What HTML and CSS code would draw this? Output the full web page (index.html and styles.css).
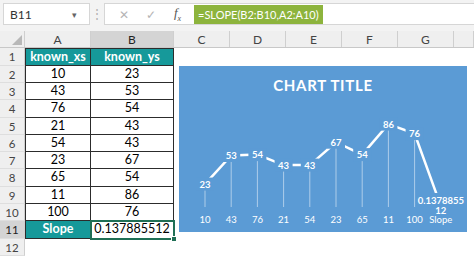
FILE: index.html
```html
<!DOCTYPE html>
<html lang="en">

<head>
    <meta charset="UTF-8">
    <meta name="viewport" content="width=device-width, initial-scale=1.0">
    <link rel="stylesheet" href="styles.css">
    <title>SLOPE</title>
</head>

<body>
<div class="fbar">
    <div class="namebox"><span>B11</span><span class="caret">&#9662;</span></div>
    <div class="grip">&#8942;</div>
    <div class="input">
        <span class="btn">&#10005;</span>
        <span class="btn">&#10003;</span>
        <span class="btn fx">f<sub>x</sub></span>
        <span class="formula">=SLOPE(B2:B10,A2:A10)</span>
    </div>
</div>

<div class="sheet">
    <div class="row head">
        <div class="rh corner">
            <svg width="10" height="10" viewBox="0 0 10 10"><polygon points="10,0 10,10 0,10" fill="#b8b8b8"/></svg>
        </div>
        <div class="ch a">A</div>
        <div class="ch b on">B</div>
        <div class="ch c">C</div>
        <div class="ch c">D</div>
        <div class="ch c">E</div>
        <div class="ch c">F</div>
        <div class="ch c">G</div>
        <div class="ch h"></div>
    </div>
    <div class="row"><div class="rh">1</div><div class="cell a th top">known_xs</div><div class="cell b th top">known_ys</div></div>
    <div class="row"><div class="rh">2</div><div class="cell a">10</div><div class="cell b">23</div></div>
    <div class="row"><div class="rh">3</div><div class="cell a">43</div><div class="cell b">53</div></div>
    <div class="row"><div class="rh">4</div><div class="cell a">76</div><div class="cell b">54</div></div>
    <div class="row"><div class="rh">5</div><div class="cell a">21</div><div class="cell b">43</div></div>
    <div class="row"><div class="rh">6</div><div class="cell a">54</div><div class="cell b">43</div></div>
    <div class="row"><div class="rh">7</div><div class="cell a">23</div><div class="cell b">67</div></div>
    <div class="row"><div class="rh">8</div><div class="cell a">65</div><div class="cell b">54</div></div>
    <div class="row"><div class="rh">9</div><div class="cell a">11</div><div class="cell b">86</div></div>
    <div class="row"><div class="rh">10</div><div class="cell a">100</div><div class="cell b">76</div></div>
    <div class="row"><div class="rh on">11</div><div class="cell a th">Slope</div><div class="cell b sel">0.137885512<i class="handle"></i></div></div>
    <div class="row"><div class="rh">12</div></div>

    <!-- chart sits over columns C..G -->
    <div class="chart">
        <svg width="288" height="166" viewBox="0 0 288 166">
            <text class="title" x="144" y="25">CHART TITLE</text>
            <g class="drops">
                <line x1="26" y1="118" x2="26" y2="141"/>
                <line x1="52.2" y1="89.5" x2="52.2" y2="141"/>
                <line x1="78.4" y1="88.6" x2="78.4" y2="141"/>
                <line x1="104.6" y1="99.1" x2="104.6" y2="141"/>
                <line x1="130.8" y1="99.1" x2="130.8" y2="141"/>
                <line x1="157" y1="76.2" x2="157" y2="141"/>
                <line x1="183.2" y1="88.6" x2="183.2" y2="141"/>
                <line x1="209.4" y1="58.1" x2="209.4" y2="141"/>
                <line x1="235.6" y1="67.6" x2="235.6" y2="141"/>
            </g>
            <polyline class="line" points="26,118.1 52.2,89.5 78.4,88.6 104.6,99.1 130.8,99.1 157,76.2 183.2,88.6 209.4,58.1 235.6,67.6 261.8,139.9"/>
            <g class="pads">
                <rect x="17" y="111.6" width="18" height="13"/>
                <rect x="43.2" y="83" width="18" height="13"/>
                <rect x="69.4" y="82.1" width="18" height="13"/>
                <rect x="95.6" y="92.6" width="18" height="13"/>
                <rect x="121.8" y="92.6" width="18" height="13"/>
                <rect x="148" y="69.7" width="18" height="13"/>
                <rect x="174.2" y="82.1" width="18" height="13"/>
                <rect x="200.4" y="51.6" width="18" height="13"/>
                <rect x="226.6" y="61.1" width="18" height="13"/>
                <rect x="237" y="127" width="50" height="22"/>
            </g>
            <g class="axis">
                <text x="26" y="157">10</text>
                <text x="52.2" y="157">43</text>
                <text x="78.4" y="157">76</text>
                <text x="104.6" y="157">21</text>
                <text x="130.8" y="157">54</text>
                <text x="157" y="157">23</text>
                <text x="183.2" y="157">65</text>
                <text x="209.4" y="157">11</text>
                <text x="235.6" y="157">100</text>
                <text x="261.8" y="157">Slope</text>
            </g>
            <g class="labels">
                <text x="26" y="121.5">23</text>
                <text x="52.2" y="92.9">53</text>
                <text x="78.4" y="92">54</text>
                <text x="104.6" y="102.5">43</text>
                <text x="130.8" y="102.5">43</text>
                <text x="157" y="79.6">67</text>
                <text x="183.2" y="92">54</text>
                <text x="209.4" y="61.5">86</text>
                <text x="235.6" y="71">76</text>
                <text x="261.8" y="137.5">0.1378855</text>
                <text x="261.8" y="147.5">12</text>
            </g>
        </svg>
    </div>
</div>
</body>

</html>
```
FILE: styles.css
```css
* {
    margin: 0;
    padding: 0;
    box-sizing: border-box;
}

body {
    width: 474px;
    height: 259px;
    overflow: hidden;
    background: #fff;
    font-family: Lato, "Liberation Sans", sans-serif;
    font-size: 12px;
    color: #000;
}

/* formula bar */
.fbar {
    height: 31px;
    background: #f3f3f3;
    display: flex;
    align-items: flex-start;
    padding-top: 3px;
}

.namebox {
    width: 87px;
    height: 22px;
    margin-left: 3px;
    background: #fff;
    border: 1px solid #d6d6d6;
    display: flex;
    align-items: center;
    justify-content: space-between;
    padding: 0 12px 0 6px;
    color: #333;
}

.caret {
    font-size: 9px;
    color: #666;
}

.grip {
    width: 14px;
    text-align: center;
    color: #b0b0b0;
    line-height: 22px;
}

.input {
    flex: 1;
    height: 22px;
    background: #fff;
    border: 1px solid #d6d6d6;
    border-right: 0;
    display: flex;
    align-items: center;
    padding-left: 5px;
}

.btn {
    width: 27px;
    text-align: center;
    color: #b5b5b5;
    font-size: 12px;
}

.btn.fx {
    font-family: "Liberation Serif", serif;
    font-style: italic;
    color: #555;
    font-size: 13px;
}

.btn.fx sub {
    font-size: 8px;
}

.formula {
    margin-left: 3px;
    height: 19px;
    line-height: 19px;
    padding: 0 4px;
    background: #8db43d;
    color: #fff;
    font-size: 11px;
}

/* sheet */
.sheet {
    position: relative;
}

.row {
    display: flex;
    height: 17.3px;
}

.rh {
    width: 25px;
    background: #efefef;
    border-right: 1px solid #cfcfcf;
    border-bottom: 1px solid #dedede;
    color: #444;
    text-align: center;
    line-height: 17px;
    font-size: 11.5px;
}

.rh.on {
    background: #d4d4d4;
    color: #222;
}

.head {
    height: 17.4px;
    border-bottom: 1px solid #c8c8c8;
}

.corner {
    display: flex;
    align-items: flex-end;
    justify-content: flex-end;
    padding: 0 2px 2px 0;
    border-bottom: 0;
}

.ch {
    background: #efefef;
    border-right: 1px solid #cfcfcf;
    text-align: center;
    line-height: 17px;
    color: #444;
    font-size: 12px;
}

.ch.on {
    background: #d4d4d4;
    color: #222;
}

.a {
    width: 66px;
}

.b {
    width: 83px;
}

.c {
    width: 56px;
}

.h {
    width: 20px;
}

.cell {
    text-align: center;
    line-height: 16px;
    border-right: 1px solid #2c2c2c;
    border-bottom: 1px solid #2c2c2c;
    font-size: 12.5px;
}

.cell.a {
    border-left: 1px solid #2c2c2c;
}

.cell.top {
    border-top: 1px solid #2c2c2c;
}

.th {
    background: #16999a;
    color: #fff;
    font-weight: bold;
}

.sel {
    position: relative;
    outline: 2px solid #1f6f55;
    outline-offset: -1px;
}

.handle {
    position: absolute;
    right: -4px;
    bottom: -4px;
    width: 6px;
    height: 6px;
    background: #1f6f55;
    border: 1px solid #fff;
}

/* chart */
.chart {
    position: absolute;
    left: 179px;
    top: 35px;
    width: 288px;
    height: 166px;
    background: #5b9bd5;
}

.chart svg {
    display: block;
}

.title {
    fill: #fff;
    font-weight: bold;
    font-size: 15px;
    letter-spacing: 0.7px;
    text-anchor: middle;
}

.drops line {
    stroke: rgba(255, 255, 255, 0.5);
    stroke-width: 1;
}

.line {
    fill: none;
    stroke: #fff;
    stroke-width: 2.5;
}

.pads rect {
    fill: #5b9bd5;
}

.axis text {
    fill: #fff;
    font-size: 9.5px;
    text-anchor: middle;
}

.labels text {
    fill: #fff;
    font-size: 9.5px;
    font-weight: bold;
    text-anchor: middle;
}
```
